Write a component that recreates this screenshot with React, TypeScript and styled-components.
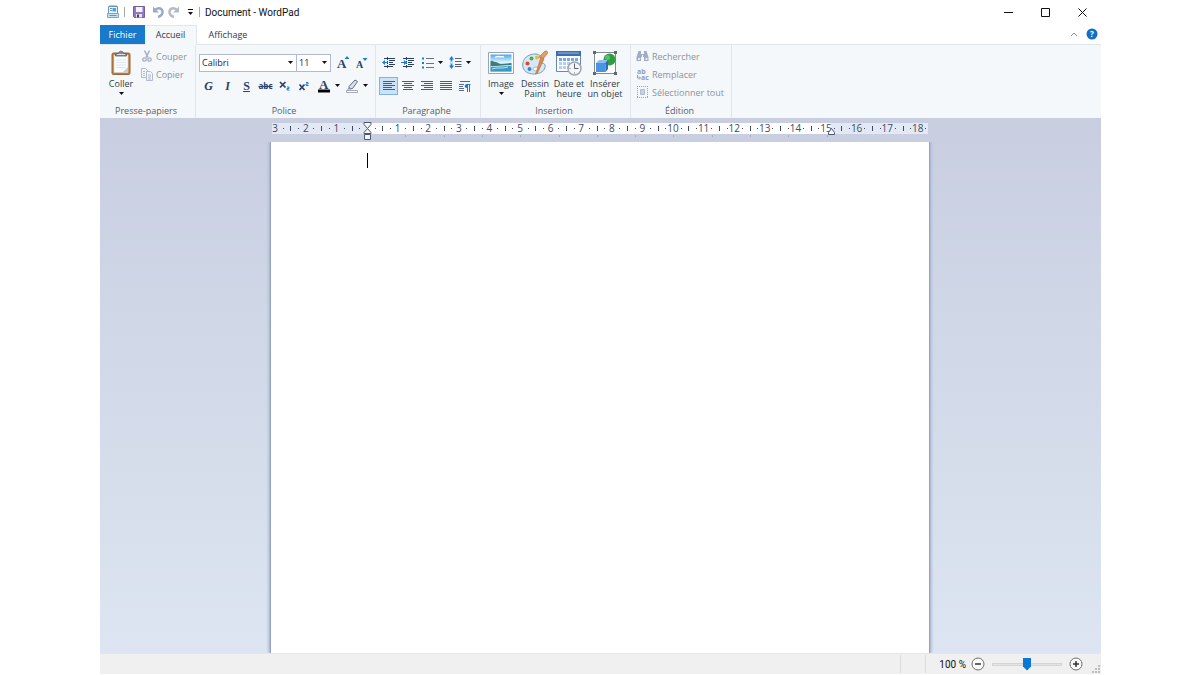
import React from "react";
import styled, { createGlobalStyle, css } from "styled-components";

const navy = "#2b3f66";
const blue = "#1c7cd2";

const GlobalStyle = createGlobalStyle`
  * { box-sizing: border-box; }
  body { margin: 0; background: #fff; }
  body, button, select, input { font-family: "Open Sans", "Noto Sans", sans-serif; font-size: 9px; }
`;

const Window = styled.div`
  display: flex;
  flex-direction: column;
  min-height: calc(100vh - 1px);
  margin: 0 99px 0 100px;
  background: #fff;
  color: #3b4350;
`;

const TitleBar = styled.header`
  display: flex;
  align-items: center;
  height: 25px;
  padding: 0 0 1px 3px;
`;

const Title = styled.h1`
  flex: 1;
  margin: 0;
  padding-left: 3px;
  font-family: Roboto, sans-serif;
  font-size: 10px;
  font-weight: 400;
  color: #111;
`;

const Separator = styled.span`
  width: 1px;
  height: 10px;
  margin: 0 2px;
  background: #a8a8a8;
`;

const IconButton = styled.button<{ $w?: number; $active?: boolean }>`
  display: flex;
  align-items: center;
  justify-content: center;
  gap: 4px;
  width: ${(p) => p.$w ?? 19}px;
  height: 18px;
  padding: 0;
  border: 1px solid ${(p) => (p.$active ? "#7fb2e8" : "transparent")};
  background: ${(p) => (p.$active ? "#cbe2f9" : "transparent")};
  color: ${navy};
  svg { flex: none; overflow: visible; }
`;

const WindowButtons = styled.div`
  display: flex;
`;

const TabRow = styled.nav`
  display: flex;
  height: 19px;
`;

const Tab = styled.button<{ $kind: "file" | "active" | "plain" }>`
  height: 19px;
  padding: 0;
  border: 0;
  background: transparent;
  color: #333b48;
  ${(p) => p.$kind === "file" && css`
    width: 45px;
    background: #1979ca;
    color: #fff;
  `}
  ${(p) => p.$kind === "active" && css`
    width: 52px;
    height: 20px;
    padding-bottom: 2px;
    background: #f5f8fb;
    border: 1px solid #e2e6ea;
    border-width: 1px 1px 0 0;
    z-index: 1;
  `}
  ${(p) => p.$kind === "plain" && css`width: 62px;`}
`;

const TabTools = styled.div`
  display: flex;
  margin-left: auto;
`;

const Ribbon = styled.section`
  display: flex;
  height: 74px;
  background: #f5f8fb;
  border-top: 1px solid #e2e6ea;
`;

const Group = styled.fieldset<{ $w: number }>`
  display: flex;
  flex-direction: column;
  width: ${(p) => p.$w}px;
  margin: 0;
  padding: 2px 0 0 3px;
  border: 0;
  border-right: 1px solid #e2e6ec;
`;

const GroupName = styled.span`
  margin-top: auto;
  padding-right: 6px;
  line-height: 14px;
  text-align: center;
  color: #565d68;
`;

const Columns = styled.div`
  display: flex;
`;

const Rows = styled.div`
  display: flex;
  flex-direction: column;
`;

const ToolRows = styled(Rows)`
  gap: 6px;
  padding-top: 7px;
`;

const ToolRow = styled.div`
  display: flex;
  align-items: center;
  height: 17px;
`;

const BigButton = styled.button<{ $w: number }>`
  display: flex;
  flex-direction: column;
  align-items: center;
  gap: 3px;
  width: ${(p) => p.$w}px;
  padding: 3px 0 0;
  border: 0;
  background: transparent;
  color: #333b48;
  line-height: 10px;
  white-space: nowrap;
  svg { flex: none; }
`;

const SmallButton = styled.button`
  display: flex;
  align-items: center;
  gap: 3px;
  height: 18px;
  padding: 0 0 0 2px;
  border: 0;
  background: transparent;
  color: #8e9299;
  white-space: nowrap;
  svg { overflow: visible; }
`;

const Combo = styled.span<{ $w: number }>`
  display: flex;
  align-items: center;
  width: ${(p) => p.$w}px;
  height: 18px;
  padding-right: 3px;
  border: 1px solid #b3b9d2;
  background: #fff;
  & + & { border-left: 0; }
  select {
    flex: 1;
    min-width: 0;
    height: 16px;
    padding: 0 2px;
    border: 0;
    appearance: none;
    background: transparent;
    color: #1c2440;
  }
`;

const Workspace = styled.main`
  display: flex;
  flex: 1;
  flex-direction: column;
  align-items: center;
  background: linear-gradient(#c8cee0, #dce5f1);
`;

const RulerFrame = styled.div`
  width: 658px;
  height: 24px;
  margin-right: 1px;
  svg { display: block; }
`;

const Paper = styled.div`
  flex: 1;
  width: 658px;
  margin-right: 1px;
  padding: 11px 96px;
  background: #fff;
  box-shadow: -1px 0 1px #93a1ba, 1px 0 1px #93a1ba, 3px 0 2px #b6c2d8, -3px 0 2px #b6c2d8;
  clip-path: inset(0 -5px);
  outline: 0;
`;

const TextCaret = styled.span`
  display: block;
  width: 1px;
  height: 15px;
  background: #000;
`;

const StatusBar = styled.footer`
  display: flex;
  align-items: center;
  justify-content: flex-end;
  height: 21px;
  background: #f0f0f0;
  border-top: 1px solid #e4e6ea;
`;

const StatusCell = styled.span`
  width: 26px;
  height: 18px;
  border: 1px solid #dcdcdc;
  border-width: 0 1px;
`;

const ZoomValue = styled.label`
  width: 45px;
  padding-right: 5px;
  font-family: Roboto, sans-serif;
  font-size: 10px;
  text-align: right;
  color: #111;
`;

const ZoomSlider = styled.input`
  width: 70px;
  height: 16px;
  margin: 0 7px;
  appearance: none;
  background: transparent;
  &::-webkit-slider-runnable-track {
    height: 3px;
    background: #e4e4e4;
    border: 1px solid #d4d4d4;
  }
  &::-webkit-slider-thumb {
    appearance: none;
    width: 8px;
    height: 13px;
    margin-top: -6px;
    background: #0a78d4;
    clip-path: polygon(0 0, 100% 0, 100% 70%, 50% 100%, 0 70%);
  }
`;

const Grip = styled.span`
  display: flex;
  align-self: flex-end;
  margin-left: 9px;
  padding: 0 1px 1px 0;
`;

const Caret = () => (
  <svg width="5" height="3" viewBox="0 0 5 3"><path d="M0 0h5L2.500 3z" fill="#111" /></svg>
);

const AppIcon = () => (
  <svg width="12" height="14" viewBox="0 0 12 14">
    <path d="M1.500 1.500h9v7h-9z" fill="#eaf4fb" stroke="#6d94b3" />
    <path d="M3 1v-1M5 1v-1M7 1v-1M9 1v-1" stroke="#6d94b3" />
    <path d="M3 3.500h2M3 5.500h2" stroke="#7393b0" />
    <path d="M5.500 3h3.500v3.500h-3.500z" fill="#4aa2d8" />
    <path d="M.5 8.500h11v4h-11z" fill="#c4e0f2" stroke="#7ba8c7" />
    <path d="M2.500 10.500h7" stroke="#5f97c0" />
  </svg>
);
const SaveIcon = () => (
  <svg width="12" height="12" viewBox="0 0 12 12">
    <path d="M.5.5h11v11h-10l-1-1z" fill="#9278c2" stroke="#735ca6" />
    <path d="M3 1h6.500v5h-6.500z" fill="#f6f3fb" />
    <path d="M3 8h6v3.500h-6z" fill="#e6e2ee" /><path d="M4 8.500h2v3h-2z" fill="#493778" />
  </svg>
);
const UndoIcon = ({ flip }: { flip?: boolean }) => (
  <svg width="12" height="12" viewBox="0 0 12 12">
    <g transform={flip ? "matrix(-1 0 0 1 12 0)" : undefined}>
      <path d="M3 4c4-3 7.500-1.500 7.500 2 0 2.500-1.500 4-4.500 5" fill="none" stroke={flip ? "#b4bccb" : "#9aabc9"} strokeWidth="2.500" />
      <path d="M1 .5v6h6z" fill={flip ? "#b4bccb" : "#9aabc9"} />
    </g>
  </svg>
);
const QuickMenuIcon = () => (
  <svg width="5" height="6" viewBox="0 0 5 6"><path d="M0 0h5v1h-5zM0 3h5l-2.500 3z" fill="#111" /></svg>
);

const PasteIcon = () => (
  <svg width="22" height="26" viewBox="0 0 22 26">
    <rect x="2" y="3" width="18" height="21.500" rx="1.500" fill="#bd7c35" stroke="#9a6532" />
    <path d="M4 5h14v17.500h-14z" fill="#fafcff" stroke="#d0d3da" strokeWidth=".7" />
    <path d="M6 10h10M6 12.500h10M6 15h10M6 17.500h10" stroke="#dfe5ee" />
    <path d="M13 22l5-5v5z" fill="#c4cad6" />
    <path d="M5.500 6V3.500h3c0-3 5-3 5 0h3V6z" fill="#858c98" stroke="#5c626e" strokeWidth=".8" />
    <path d="M7 4.500h8" stroke="#dde1e8" />
  </svg>
);
const CutIcon = () => (
  <svg width="12" height="12" viewBox="0 0 12 12" fill="none" stroke="#a4aec6">
    <path d="M3.500.5l3.500 7M8.500.5l-3.500 7" strokeWidth="1.500" />
    <circle cx="3.500" cy="9.500" r="1.700" strokeWidth="1.300" /><circle cx="8.500" cy="9.500" r="1.700" strokeWidth="1.300" />
  </svg>
);
const CopyIcon = () => (
  <svg width="12" height="13" viewBox="0 0 12 13" stroke="#b2bacf" fill="#f2f5fb">
    <path d="M.5.5h4l2 2v7h-6z" /><path d="M2 3.500h2M2 5.500h2M2 7.500h2" />
    <path d="M5.500 3.500h4l2 2v7h-6z" /><path d="M7 7h3M7 9h3M7 11h3" />
  </svg>
);

type GlyphProps = { $size: number; $weight?: number; $italic?: boolean; $line?: "underline" | "line-through" };
const Glyph = styled.span<GlyphProps>`
  font-family: "Liberation Serif", serif;
  font-size: ${(p) => p.$size}px;
  font-weight: ${(p) => p.$weight ?? 700};
  font-style: ${(p) => (p.$italic ? "italic" : "normal")};
  text-decoration: ${(p) => p.$line ?? "none"};
  line-height: 14px;
`;
const StrikeGlyph = styled(Glyph)`
  font-family: "Open Sans", sans-serif;
`;

const GrowIcon = ({ down }: { down?: boolean }) => (
  <svg width="13" height="13" viewBox="0 0 13 13">
    <text x={down ? 1 : 0} y="12" fontFamily="Liberation Serif" fontWeight="700" fontSize={down ? 10 : 13} fill={navy}>A</text>
    <path d={down ? "M7.500 2h5l-2.500 3z" : "M7.500 3h5l-2.500-3z"} fill={blue} />
  </svg>
);
const ScriptIcon = ({ sup }: { sup?: boolean }) => (
  <svg width="12" height="12" viewBox="0 0 12 12">
    <path d={sup ? "M1.500 4.500l5 5.500M6.500 4.500l-5 5.500" : "M1 2l5.500 5.500M6.500 2L1 7.500"} stroke={navy} strokeWidth="1.700" />
    <path d={sup ? "M8 2.500h2v1.500h-2v1.500h2.500" : "M8 7h2v1.500h-2v1.500h2.500"} stroke={blue} fill="none" />
  </svg>
);
const ColorIcon = () => (
  <svg width="14" height="14" viewBox="0 0 14 14">
    <text x="2" y="10" fontFamily="Liberation Serif" fontWeight="700" fontSize="13" fill={navy}>A</text>
    <path d="M1 10.500h12v3h-12z" fill="#000" />
  </svg>
);
const HighlightIcon = () => (
  <svg width="14" height="14" viewBox="0 0 14 14">
    <path d="M1.500 11.500h11v2h-11z" fill="#fff" stroke="#a6abb8" />
    <path d="M4 7.500l6-6.500 2.500 1.500-5 7-3 .5z" fill="#dbe1ed" stroke="#5f6b82" /><path d="M4 8l-2 3 4.500-1.500z" fill="#8995ab" />
  </svg>
);

const IndentIcon = ({ right }: { right?: boolean }) => (
  <svg width="14" height="12" viewBox="0 0 14 12">
    <path d="M2 1.500h11M7 3.500h6M7 5.500h4M7 7.500h6M2 9.500h9" stroke={navy} />
    <path d="M5.500 0v12" stroke={navy} strokeDasharray="1 1" />
    <path d={right ? "M6 5.500L3 3v2H0v1h3v2z" : "M0 5.500L3 3v2h3v1H3v2z"} fill={blue} />
  </svg>
);
const BulletsIcon = () => (
  <svg width="12" height="12" viewBox="0 0 12 12">
    <path d="M0 .5h2v2H0zM0 5h2v2H0zM0 9.500h2v2H0z" fill={blue} />
    <path d="M4 1.500H12M4 6.500H12M4 10.500H12" stroke="#65728e" />
  </svg>
);
const SpacingIcon = () => (
  <svg width="13" height="13" viewBox="0 0 13 13">
    <path d="M2.500 0L5 3.500H3.300v6H5L2.500 13 0 9.500h1.700v-6H0z" fill={blue} />
    <path d="M2 6.500h1.500" stroke="#f5f8fb" strokeWidth="2" />
    <path d="M6 2.500h6.500M6 5.500h6.500M6 8.500h6.500M6 10.500h6.500" stroke="#51607f" />
  </svg>
);
const alignPaths = {
  left: "M0 1.500h12M0 3.500h9M0 5.500h12M0 7.500h9M0 9.500h12",
  center: "M0 1.500h12M2 3.500h8M0 5.500h12M2 7.500h8M1 9.500h10",
  right: "M0 1.500h12M3 3.500h9M0 5.500h12M3 7.500h9M0 9.500h12",
  justify: "M0 1.500h12M0 3.500h12M0 5.500h12M0 7.500h12M0 9.500h12",
};
const AlignIcon = ({ kind }: { kind: keyof typeof alignPaths }) => (
  <svg width="12" height="11" viewBox="0 0 12 11"><path d={alignPaths[kind]} stroke="#4b5b7b" /></svg>
);
const ParagraphIcon = () => (
  <svg width="12" height="12" viewBox="0 0 12 12">
    <path d="M1 1.500h10M0 4.500h5M0 6.500h4M0 8.500h5M0 10.500h5" stroke="#5c6a88" />
    <path d="M11.500 4H8c-3 0-3 4 0 4v4h1V5h1v7h1V5h.5z" fill={blue} />
  </svg>
);

const PictureIcon = () => (
  <svg width="26" height="26" viewBox="0 0 26 26">
    <defs><linearGradient id="sky" x2="0" y2="1"><stop stopColor="#4aa5e6" /><stop offset=".45" stopColor="#dcf3fd" /><stop offset="1" stopColor="#7cc4e4" /></linearGradient></defs>
    <path d="M.5 2.500h25v21H.5z" fill="#fdfdfd" stroke="#9da5b1" />
    <path d="M2.500 4.500h21v17h-21z" fill="url(#sky)" />
    <path d="M2.500 11c2-1 3 1 5 1s3 2 6 2l10-1v2l-11 1-10 1z" fill="#3d7d78" />
    <path d="M2.500 17c6-2 11 0 21-2v6.500h-21z" fill="#3d97c6" />
    <path d="M2.500 16.500c6 .5 12-1 21-1M4 19c5-2 11 0 16-2" stroke="#b9e6f2" fill="none" />
    <path d="M7 7.500c3-2 6 0 9-1" stroke="#f3fbff" strokeWidth="1.500" fill="none" />
  </svg>
);
const PaintIcon = () => (
  <svg width="26" height="26" viewBox="0 0 26 26">
    <path d="M13 4C6 4 .7 8.500.7 15c0 6 5 9 11 9 7 0 11.500-3.500 11.500-8 0-3-3-2.500-4.500-3.500s1-3 0-5.500S16 4 13 4z" fill="#d7e7f5" stroke="#769dc3" />
    <circle cx="5.500" cy="13.500" r="2" fill="#d8473e" /><circle cx="9.500" cy="8.500" r="2" fill="#49ad4f" />
    <circle cx="15" cy="7.500" r="2" fill="#eeb73b" /><circle cx="7.500" cy="19" r="2" fill="#3b83cd" />
    <ellipse cx="14" cy="19" rx="3" ry="2" fill="#fff" stroke="#84a5c4" strokeWidth=".7" />
    <path d="M23 1c2.500-.5 3 1 2.500 2.500L21 9l-4-2z" fill="#d9a06c" stroke="#b37d4c" strokeWidth=".7" />
    <path d="M19 7l3 2-6.500 14-2 1 1-3z" fill="#db8a4c" stroke="#b07242" strokeWidth=".6" />
  </svg>
);
const CalendarIcon = () => (
  <svg width="26" height="26" viewBox="0 0 26 26">
    <path d="M.5 1.500h24v20H.5z" fill="#fff" stroke="#6389bc" />
    <path d="M0 1h25v5H0z" fill="#3a6eb2" /><path d="M2 3h21" stroke="#92b7df" />
    <path d="M3 8h19v11H3z" fill="#b5cff0" /><path d="M2 11.500h21M2 15.500h21M6.500 7v13M10.500 7v13M14.500 7v13M18.500 7v13" stroke="#fff" />
    <path d="M3 8h19v3H3z" fill="#7ca6dc" /><path d="M6.500 8v3M10.500 8v3M14.500 8v3M18.500 8v3" stroke="#fff" />
    <circle cx="18.500" cy="18.500" r="6.500" fill="#f4f6f8" stroke="#a2a8b1" strokeWidth="1.500" />
    <path d="M18.500 13.500v5h4" stroke="#59616e" fill="none" /><path d="M13.500 18.500h1M18.500 22.500v1" stroke="#59616e" />
  </svg>
);
const ObjectIcon = () => (
  <svg width="26" height="26" viewBox="0 0 26 26">
    <path d="M2.500 2.500h21v21h-21z" fill="#fff" stroke="#85888f" />
    <circle cx="17.500" cy="9.500" r="6" fill="#2e9c43" /><circle cx="15.500" cy="7.500" r="2.500" fill="#62bb69" />
    <path d="M4 13l3-3h9l-2.500 3z" fill="#8cc0f2" /><path d="M4 13h9.500v9H4z" fill="#4a94e2" /><path d="M13.500 13l2.500-3v9l-2.500 3z" fill="#2a6cba" />
    <path d="M1 1h3v3H1zM22 1h3v3h-3zM1 22h3v3H1zM22 22h3v3h-3z" fill="#62666e" />
  </svg>
);

const FindIcon = () => (
  <svg width="13" height="12" viewBox="0 0 13 12" fill="#a3acc7">
    <path d="M2.500 1h2.500v3h3V1h2.500l2 6v4H8V7H5v4H.5V7z" /><path d="M2 8h2v2H2zM9.500 8h2v2h-2z" fill="#e4e8f3" /><path d="M6 5h1v2H6z" fill="#f5f8fb" />
  </svg>
);
const ReplaceIcon = () => (
  <svg width="13" height="13" viewBox="0 0 13 13" fill="#8f9cba">
    <text x="1" y="6" fontFamily="Open Sans" fontWeight="700" fontSize="7">ab</text>
    <text x="5" y="12" fontFamily="Open Sans" fontWeight="700" fontSize="7">ac</text>
    <path d="M1.500 7v3h2.500M3 8.500L4.500 10 3 11.500" fill="none" stroke="#8f9cba" />
  </svg>
);
const SelectIcon = () => (
  <svg width="13" height="12" viewBox="0 0 13 12">
    <path d="M1 .5h11M1 11.500h11M1.500 2v9M11.500 2v9" fill="none" stroke="#98a2bd" strokeDasharray="1 1" />
    <path d="M4.500 3.500h4v5h-4z" fill="#c9d0e4" stroke="#b1bad3" />
  </svg>
);

const MinIcon = () => <svg width="9" height="9" viewBox="0 0 9 9"><path d="M0 4.500h9" stroke="#111" /></svg>;
const MaxIcon = () => <svg width="9" height="9" viewBox="0 0 9 9"><path d="M.5.5h8v8h-8z" fill="none" stroke="#111" /></svg>;
const CloseIcon = () => <svg width="9" height="9" viewBox="0 0 9 9"><path d="M.5.500l8 8M8.500.500l-8 8" stroke="#111" /></svg>;
const CollapseIcon = () => <svg width="8" height="5" viewBox="0 0 8 5"><path d="M1 4l3-3 3 3" fill="none" stroke="#8b8b8b" /></svg>;
const HelpIcon = () => (
  <svg width="12" height="12" viewBox="0 0 12 12">
    <circle cx="6" cy="6" r="5.500" fill="#0f6fc9" />
    <text x="6" y="9" textAnchor="middle" fontFamily="Open Sans" fontWeight="700" fontSize="8" fill="#fff">?</text>
  </svg>
);
const ZoomIcon = ({ plus }: { plus?: boolean }) => (
  <svg width="14" height="14" viewBox="0 0 14 14">
    <circle cx="7" cy="7" r="6" fill="#fafafa" stroke="#6e6e6e" />
    <path d={plus ? "M4 7h6M7 4v6" : "M4 7h6"} stroke="#333" strokeWidth="1.500" />
  </svg>
);

const CM = 30.6;
const ORIGIN = 96;
const Ruler = () => (
  <svg width="658" height="24" viewBox="0 0 658 24">
    <path d="M1 5h656v11H1z" fill="#e3e9f4" />
    <path d="M96 5h464v11H96z" fill="#fff" />
    {Array.from({ length: 22 }, (_, i) => i - 3).map((n) => {
      const x = ORIGIN + n * CM;
      return (
        <g key={n} fill="#3e4a66">
          {n !== 0 && <text x={x} y="14" textAnchor="middle" fontFamily="Open Sans" fontSize="10">{Math.abs(n)}</text>}
          <path d={`M${Math.round(x + CM / 4)} 10h1v1h-1z`} />
          {n < 18 && <path d={`M${Math.round(x + CM / 2)} 8h1v5h-1zM${Math.round(x + (CM * 3) / 4)} 10h1v1h-1z`} />}
        </g>
      );
    })}
    {Array.from({ length: 12 }, (_, i) => (
      <path key={i} d={`M${Math.round(ORIGIN + (i + 1) * 38.3)} 17h1v2h-1z`} fill="#a5aec4" />
    ))}
    <g fill="#f5f7fb" stroke="#4a5676">
      <path d="M93 4.500h7v2l-3.500 4-3.500-4z" /><path d="M93 15.500v-1l3.500-4 3.500 4v1z" /><path d="M93.500 16.500h6v5h-6z" />
      <path d="M557.500 16.500v-2l3-4 3 4v2z" />
    </g>
  </svg>
);

export default function App() {
  return (
    <>
      <GlobalStyle />
      <Window>
        <TitleBar>
          <IconButton aria-label="WordPad"><AppIcon /></IconButton>
          <Separator />
          <IconButton $w={24} aria-label="Enregistrer"><SaveIcon /></IconButton>
          <IconButton $w={14} aria-label="Annuler"><UndoIcon /></IconButton>
          <IconButton $w={18} aria-label="Rétablir"><UndoIcon flip /></IconButton>
          <IconButton $w={14} aria-label="Personnaliser"><QuickMenuIcon /></IconButton>
          <Separator />
          <Title>Document - WordPad</Title>
          <WindowButtons>
            <IconButton $w={37} aria-label="Réduire"><MinIcon /></IconButton>
            <IconButton $w={37} aria-label="Agrandir"><MaxIcon /></IconButton>
            <IconButton $w={37} aria-label="Fermer"><CloseIcon /></IconButton>
          </WindowButtons>
        </TitleBar>
        <TabRow>
          <Tab $kind="file">Fichier</Tab>
          <Tab $kind="active">Accueil</Tab>
          <Tab $kind="plain">Affichage</Tab>
          <TabTools>
            <IconButton $w={18} aria-label="Réduire le ruban"><CollapseIcon /></IconButton>
            <IconButton $w={18} aria-label="Aide"><HelpIcon /></IconButton>
          </TabTools>
        </TabRow>
        <Ribbon>
          <Group $w={96}>
            <Columns>
              <BigButton $w={36}><PasteIcon />Coller<Caret /></BigButton>
              <Rows>
                <SmallButton><CutIcon />Couper</SmallButton>
                <SmallButton><CopyIcon />Copier</SmallButton>
              </Rows>
            </Columns>
            <GroupName>Presse-papiers</GroupName>
          </Group>
          <Group $w={180}>
            <ToolRows>
              <ToolRow>
                <Combo $w={98}><select aria-label="Police"><option>Calibri</option></select><Caret /></Combo>
                <Combo $w={34}><select aria-label="Taille"><option>11</option></select><Caret /></Combo>
                <IconButton $w={24} aria-label="Agrandir la police"><GrowIcon /></IconButton>
                <IconButton $w={12} aria-label="Réduire la police"><GrowIcon down /></IconButton>
              </ToolRow>
              <ToolRow>
                <IconButton aria-label="Gras"><Glyph $size={12} $italic>G</Glyph></IconButton>
                <IconButton aria-label="Italique"><Glyph $size={12} $italic>I</Glyph></IconButton>
                <IconButton aria-label="Souligné"><Glyph $size={12} $line="underline">S</Glyph></IconButton>
                <IconButton aria-label="Barré"><StrikeGlyph $size={8} $line="line-through">abc</StrikeGlyph></IconButton>
                <IconButton aria-label="Indice"><ScriptIcon /></IconButton>
                <IconButton aria-label="Exposant"><ScriptIcon sup /></IconButton>
                <IconButton $w={30} aria-label="Couleur du texte"><ColorIcon /><Caret /></IconButton>
                <IconButton $w={26} aria-label="Surlignage"><HighlightIcon /><Caret /></IconButton>
              </ToolRow>
            </ToolRows>
            <GroupName>Police</GroupName>
          </Group>
          <Group $w={105}>
            <ToolRows>
              <ToolRow>
                <IconButton aria-label="Diminuer le retrait"><IndentIcon /></IconButton>
                <IconButton aria-label="Augmenter le retrait"><IndentIcon right /></IconButton>
                <IconButton $w={30} aria-label="Puces"><BulletsIcon /><Caret /></IconButton>
                <IconButton $w={26} aria-label="Interligne"><SpacingIcon /><Caret /></IconButton>
              </ToolRow>
              <ToolRow>
                <IconButton $active aria-label="Aligner à gauche"><AlignIcon kind="left" /></IconButton>
                <IconButton aria-label="Centrer"><AlignIcon kind="center" /></IconButton>
                <IconButton aria-label="Aligner à droite"><AlignIcon kind="right" /></IconButton>
                <IconButton aria-label="Justifier"><AlignIcon kind="justify" /></IconButton>
                <IconButton aria-label="Paragraphe"><ParagraphIcon /></IconButton>
              </ToolRow>
            </ToolRows>
            <GroupName>Paragraphe</GroupName>
          </Group>
          <Group $w={150}>
            <Columns>
              <BigButton $w={34}><PictureIcon />Image<Caret /></BigButton>
              <BigButton $w={34}><PaintIcon /><span>Dessin<br />Paint</span></BigButton>
              <BigButton $w={34}><CalendarIcon /><span>Date et<br />heure</span></BigButton>
              <BigButton $w={38}><ObjectIcon /><span>Insérer<br />un objet</span></BigButton>
            </Columns>
            <GroupName>Insertion</GroupName>
          </Group>
          <Group $w={101}>
            <Rows>
              <SmallButton><FindIcon />Rechercher</SmallButton>
              <SmallButton><ReplaceIcon />Remplacer</SmallButton>
              <SmallButton><SelectIcon />Sélectionner tout</SmallButton>
            </Rows>
            <GroupName>Édition</GroupName>
          </Group>
        </Ribbon>
        <Workspace>
          <RulerFrame><Ruler /></RulerFrame>
          <Paper role="textbox" aria-label="Document"><TextCaret /></Paper>
        </Workspace>
        <StatusBar>
          <StatusCell />
          <ZoomValue htmlFor="zoom">100 %</ZoomValue>
          <IconButton $w={14} aria-label="Zoom arrière"><ZoomIcon /></IconButton>
          <ZoomSlider id="zoom" type="range" min="0" max="100" defaultValue="50" />
          <IconButton $w={14} aria-label="Zoom avant"><ZoomIcon plus /></IconButton>
          <Grip>
            <svg width="8" height="8" viewBox="0 0 8 8"><path d="M6 0h2v2H6zM3 3h2v2H3zM6 3h2v2H6zM0 6h2v2H0zM3 6h2v2H3zM6 6h2v2H6z" fill="#bdbdbd" /></svg>
          </Grip>
        </StatusBar>
      </Window>
    </>
  );
}
